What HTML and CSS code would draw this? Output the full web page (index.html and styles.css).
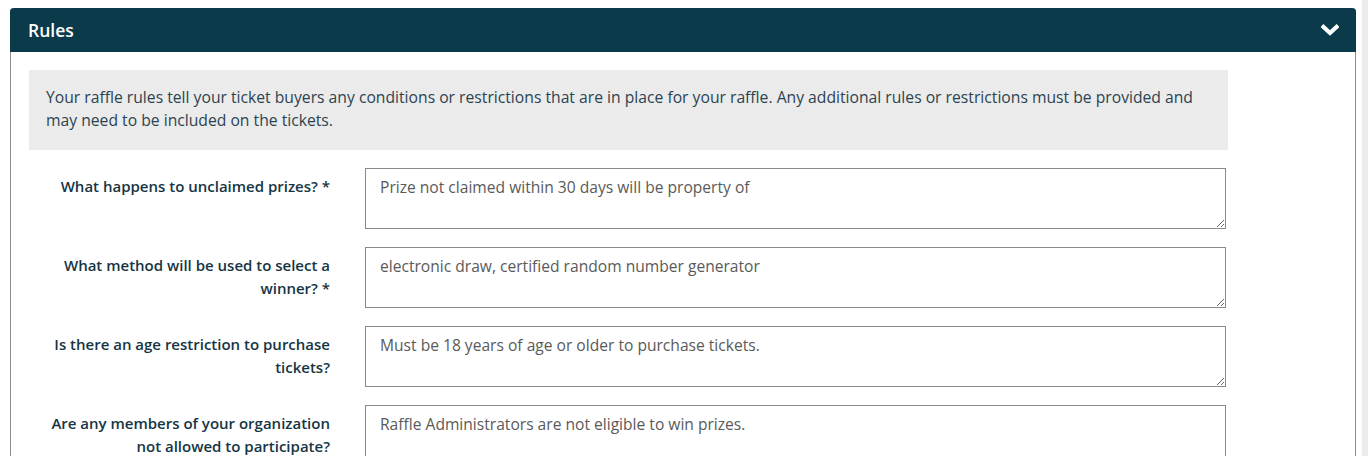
FILE: index.html
```html
<!DOCTYPE html>
<html lang="en">
<head>
  <meta charset="UTF-8" />
  <meta name="viewport" content="width=device-width, initial-scale=1" />
  <title>Raffle Rules</title>
  <link rel="stylesheet" href="styles.css">
</head>
<body>

  <div class="page">
    <!-- RULES PANEL -->
    <section class="panel" aria-label="Rules">
      <div class="panel-header">
        <h2>Rules</h2>
        <button class="toggle" aria-label="Collapse section">
          <svg width="18" height="12" viewBox="0 0 18 12" aria-hidden="true">
            <path d="M2.5 3 L9 9 L15.5 3" fill="none" stroke="#fff" stroke-width="4.2" stroke-linecap="square" stroke-linejoin="miter" />
          </svg>
        </button>
      </div>

      <div class="panel-body">
        <p class="info">Your raffle rules tell your ticket buyers any conditions or restrictions that are in place for your raffle. Any additional rules or restrictions must be provided and may need to be included on the tickets.</p>

        <div class="field">
          <label for="unclaimed">What happens to unclaimed prizes? *</label>
          <textarea id="unclaimed">Prize not claimed within 30 days will be property of</textarea>
        </div>

        <div class="field">
          <label for="method">What method will be used to select a winner? *</label>
          <textarea id="method">electronic draw, certified random number generator</textarea>
        </div>

        <div class="field">
          <label for="age">Is there an age restriction to purchase tickets?</label>
          <textarea id="age">Must be 18 years of age or older to purchase tickets.</textarea>
        </div>

        <div class="field">
          <label for="members">Are any members of your organization not allowed to participate?</label>
          <textarea id="members">Raffle Administrators are not eligible to win prizes.</textarea>
        </div>
      </div>
    </section>

    <div class="scrollbar" aria-hidden="true"></div>
  </div>

</body>
</html>
```

FILE: styles.css
```css
* {
  box-sizing: border-box;
}

html, body {
  margin: 0;
  height: 100%;
  background: #fff;
  font-family: 'Open Sans', sans-serif;
  overflow: hidden;
}

.page {
  display: flex;
  align-items: flex-start;
  padding: 8px 0 0 10px;
  height: 100%;
}

.panel {
  width: 1346px;
  border: 1px solid #8c8c8c;
  border-top: none;
  border-radius: 4px 4px 0 0;
  background: #fff;
}

.panel-header {
  display: flex;
  justify-content: space-between;
  align-items: center;
  height: 44px;
  padding: 0 17px 0 18px;
  margin: 0 -1px;
  background: #0b3a4a;
  border-radius: 4px 4px 0 0;
}

.panel-header h2 {
  margin: 0;
  color: #fff;
  font-size: 17.5px;
  font-weight: 600;
}

.toggle {
  background: transparent;
  border: none;
  padding: 0;
  display: flex;
  cursor: pointer;
}

.panel-body {
  padding: 18px 18px 0;
}

.info {
  width: 1199px;
  margin: 0 0 18px;
  padding: 16px 17px 18px;
  background: #ebebeb;
  color: #2b4350;
  font-size: 15.7px;
  line-height: 23px;
}

.field {
  display: flex;
  gap: 35px;
  margin-bottom: 18px;
}

.field label {
  width: 301px;
  padding: 7px 0 0 10px;
  text-align: right;
  color: #163544;
  font-size: 15px;
  font-weight: 600;
  line-height: 23px;
}

.field textarea {
  width: 861px;
  height: 61px;
  padding: 7px 14px;
  border: 1px solid #8a8a8a;
  border-radius: 0;
  color: #5a5a5a;
  font-family: 'Open Sans', sans-serif;
  font-size: 15.6px;
  line-height: 22px;
  resize: vertical;
}

.scrollbar {
  margin-left: auto;
  width: 6px;
  height: 100vh;
  margin-top: -8px;
  background: #ececec;
}
```
